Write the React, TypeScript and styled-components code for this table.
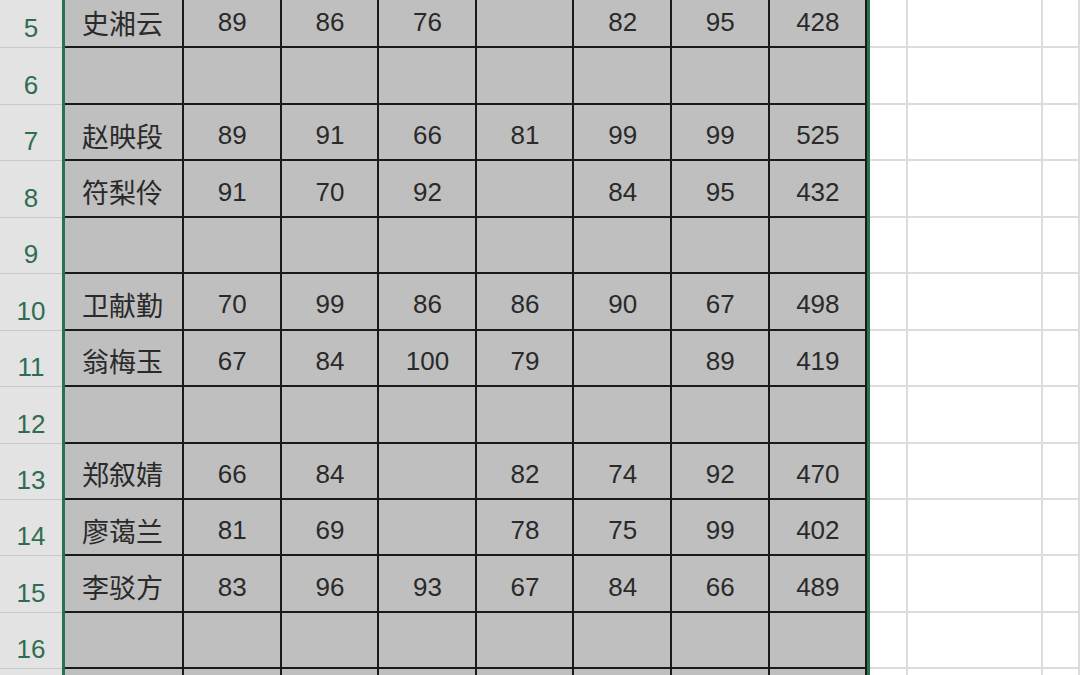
import React from "react";
import styled, { createGlobalStyle } from "styled-components";

const ROW_H = 56.45;

const GlobalStyle = createGlobalStyle`
  html, body {
    margin: 0;
    padding: 0;
    background: #ffffff;
    overflow: hidden;
  }
  #root {
    width: 1080px;
    height: 675px;
    overflow: hidden;
  }
`;

const Sheet = styled.div`
  display: flex;
  align-items: flex-start;
  margin-top: -8px;
  width: 1080px;
`;

const RowHeaders = styled.div`
  display: flex;
  flex-direction: column;
  width: 62px;
  flex: none;
  background: #e3e3e3;
`;

const RowHeader = styled.div`
  box-sizing: border-box;
  height: ${ROW_H}px;
  border-bottom: 1px solid #c9c9c9;
  display: flex;
  align-items: flex-end;
  justify-content: center;
  padding-bottom: 6px;
  font-family: "Liberation Sans", Arial, sans-serif;
  font-size: 26px;
  line-height: 1;
  color: #2f6d52;
`;

const Selection = styled.div`
  flex: none;
  display: grid;
  grid-template-columns: 119px repeat(7, 97.6px);
  grid-auto-rows: ${ROW_H}px;
  border-left: 3px solid #2a7150;
  border-right: 3px solid #2a7150;
  background: #bfbfbf;
`;

const Cell = styled.div<{ $name?: boolean }>`
  box-sizing: border-box;
  border-right: 2px solid #1a1a1a;
  border-bottom: 2px solid #1a1a1a;
  display: flex;
  align-items: center;
  justify-content: ${(p) => (p.$name ? "flex-start" : "center")};
  padding: ${(p) => (p.$name ? "6px 0 0 17px" : "6px 0 0 1px")};
  font-family: ${(p) =>
    p.$name
      ? `"Noto Sans CJK SC", "Noto Sans", sans-serif`
      : `"Liberation Sans", Arial, sans-serif`};
  font-size: ${(p) => (p.$name ? "27px" : "26px")};
  line-height: 1;
  color: #2a2a2a;
  white-space: nowrap;
`;

const Outside = styled.div`
  flex: 1;
  display: grid;
  grid-template-columns: 38px 135px 1fr;
  grid-auto-rows: ${ROW_H}px;
  background: #ffffff;
`;

const BlankCell = styled.div`
  box-sizing: border-box;
  border-right: 2px solid #dcdcdc;
  border-bottom: 2px solid #dcdcdc;
`;

type Row = { n: number; label: string; name: string; scores: (number | null)[] };

const empty = [null, null, null, null, null, null, null];

const rows: Row[] = [
  { n: 5, label: "5", name: "史湘云", scores: [89, 86, 76, null, 82, 95, 428] },
  { n: 6, label: "6", name: "", scores: empty },
  { n: 7, label: "7", name: "赵映段", scores: [89, 91, 66, 81, 99, 99, 525] },
  { n: 8, label: "8", name: "符梨伶", scores: [91, 70, 92, null, 84, 95, 432] },
  { n: 9, label: "9", name: "", scores: empty },
  { n: 10, label: "10", name: "卫献勤", scores: [70, 99, 86, 86, 90, 67, 498] },
  { n: 11, label: "11", name: "翁梅玉", scores: [67, 84, 100, 79, null, 89, 419] },
  { n: 12, label: "12", name: "", scores: empty },
  { n: 13, label: "13", name: "郑叙婧", scores: [66, 84, null, 82, 74, 92, 470] },
  { n: 14, label: "14", name: "廖蔼兰", scores: [81, 69, null, 78, 75, 99, 402] },
  { n: 15, label: "15", name: "李驳方", scores: [83, 96, 93, 67, 84, 66, 489] },
  { n: 16, label: "16", name: "", scores: empty },
  { n: 17, label: "", name: "", scores: empty },
];

export default function App() {
  return (
    <>
      <GlobalStyle />
      <Sheet>
        <RowHeaders>
          {rows.map((r) => (
            <RowHeader key={r.n}>{r.label}</RowHeader>
          ))}
        </RowHeaders>
        <Selection>
          {rows.map((r) => (
            <React.Fragment key={r.n}>
              <Cell $name>{r.name}</Cell>
              {r.scores.map((s, i) => (
                <Cell key={i}>{s ?? ""}</Cell>
              ))}
            </React.Fragment>
          ))}
        </Selection>
        <Outside>
          {rows.map((r) => (
            <React.Fragment key={r.n}>
              <BlankCell />
              <BlankCell />
              <BlankCell />
            </React.Fragment>
          ))}
        </Outside>
      </Sheet>
    </>
  );
}
